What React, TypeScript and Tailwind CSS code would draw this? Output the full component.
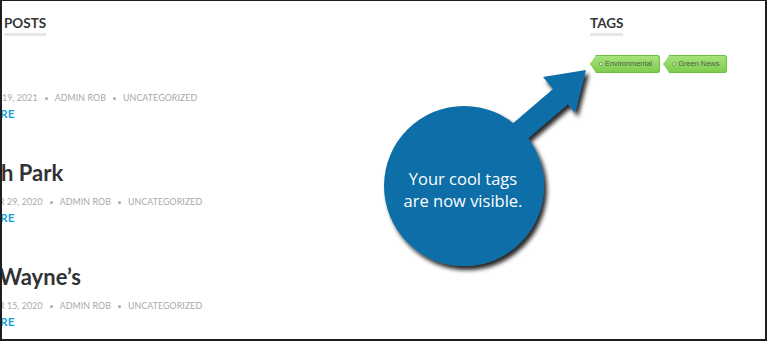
import React from "react";

interface Post {
  title: string;
  titleClass: string;
  date: string;
  metaClass: string;
}

// textos cortados na borda esquerda, como no print
const posts: Post[] = [
  { title: "", titleClass: "-ml-[1px]", date: "19, 2021", metaClass: "ml-0" },
  { title: "h Park", titleClass: "-ml-[1px]", date: "R 29, 2020", metaClass: "-ml-[3px]" },
  { title: "Wayne’s", titleClass: "-ml-[3px]", date: "R 15, 2020", metaClass: "-ml-[3px]" },
];

const tags = ["Environmental", "Green News"];

function Dot() {
  return <span className="mx-[7px] inline-block h-[3px] w-[3px] rounded-full bg-[#a9a9a9]" />;
}

function PostItem({ post }: { post: Post }) {
  return (
    <div className="mb-[37px]">
      <h2
        className={`h-[28px] whitespace-nowrap text-[22px] leading-[28px] font-bold text-[#333] ${post.titleClass}`}
      >
        {post.title}
      </h2>
      <div
        className={`mt-[8px] flex items-center whitespace-nowrap text-[8.8px] leading-[14px] uppercase tracking-[0.1px] text-[#a8a8a8] ${post.metaClass}`}
      >
        <span>{post.date}</span>
        <Dot />
        <span>Admin Rob</span>
        <Dot />
        <span>Uncategorized</span>
      </div>
      <div className="mt-[1px] -ml-[2px] text-[12px] leading-[16px] font-bold text-[#1fa1da]">RE</div>
    </div>
  );
}

function Tag({ label }: { label: string }) {
  return (
    <span className="inline-flex h-[18px] items-center gap-[2px] rounded-r-[3px] bg-linear-to-b from-[#a9e47c] to-[#7cca4b] pl-[9px] pr-[8px] shadow-[inset_0_0_0_1px_#6fbf45] [clip-path:polygon(6px_0,100%_0,100%_100%,6px_100%,0_50%)]">
      <span className="h-[4px] w-[4px] rounded-full border border-[#6f9a5a] bg-white" />
      <span className="font-['Liberation_Sans',Arial,sans-serif] text-[7.4px] leading-none text-[#4d5d43]">
        {label}
      </span>
    </span>
  );
}

export default function App() {
  return (
    <div className="relative h-[342px] w-[768px] overflow-hidden bg-white font-['Lato',sans-serif]">
      <div className="flex h-[341px] w-[767px] overflow-hidden border-t border-r-2 border-b-2 border-l-2 border-[#1e1e1e]">
        {/* coluna de posts */}
        <div className="w-[588px] pt-[9px]">
          <h3 className="ml-[2px] inline-block border-b-[3px] border-[#e6e6e6] text-[13.5px] leading-[20px] font-bold uppercase text-[#363636]">
            Posts
          </h3>
          <div className="mt-[19px]">
            {posts.map((p, i) => (
              <PostItem key={i} post={p} />
            ))}
          </div>
        </div>

        {/* coluna de tags */}
        <div className="pt-[9px]">
          <h3 className="inline-block border-b-[3px] border-[#e6e6e6] text-[13.5px] leading-[20px] font-bold uppercase text-[#363636]">
            Tags
          </h3>
          <div className="mt-[19px] flex gap-[3px]">
            {tags.map((t) => (
              <Tag key={t} label={t} />
            ))}
          </div>
        </div>
      </div>

      {/* balão azul com seta */}
      <svg
        className="pointer-events-none absolute top-0 left-0"
        width="768"
        height="342"
        viewBox="0 0 768 342"
      >
        <defs>
          <filter id="sombra" x="-20%" y="-20%" width="140%" height="140%">
            <feDropShadow dx="3" dy="4" stdDeviation="2.2" floodColor="#000" floodOpacity="0.85" />
          </filter>
        </defs>
        <g filter="url(#sombra)" fill="#0c6ea8">
          <circle cx="464" cy="186" r="80" />
          <polygon points="586,70 543,77 553,89 477,154 492,169 568,104 575,113" />
        </g>
      </svg>
      <div className="absolute top-[168px] left-[383px] w-[160px] text-center font-['Open_Sans',sans-serif] text-[16.5px] leading-[22px] text-white">
        Your cool tags
        <br />
        are now visible.
      </div>
    </div>
  );
}
